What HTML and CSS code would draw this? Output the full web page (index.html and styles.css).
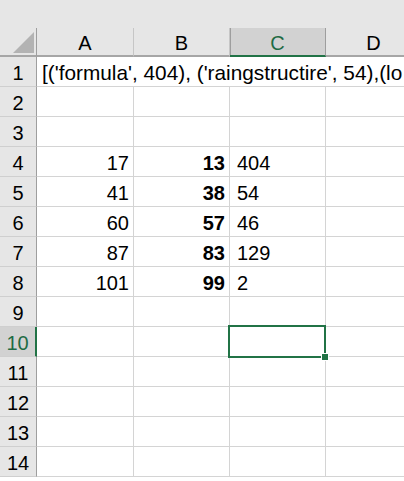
FILE: index.html
```html
<!DOCTYPE html>
<html>
<head>
<meta charset="utf-8">
<link rel="stylesheet" href="styles.css">
</head>
<body>
<div class="sheet">
  <div class="strip"></div>

  <div class="corner"><svg class="tri" width="36" height="27" viewBox="0 0 36 27"><polygon points="13,25 34,4 34,25" fill="#b3b3b3"/></svg></div>
  <div class="colh">A</div>
  <div class="colh">B</div>
  <div class="colh sel">C</div>
  <div class="colh">D</div>

  <div class="rowh">1</div>
  <div class="cell nob"><span class="over">[('formula', 404), ('raingstructire', 54),(lo</span></div>
  <div class="cell nob"></div>
  <div class="cell nob"></div>
  <div class="cell nob"></div>

  <div class="rowh">2</div><div class="cell"></div><div class="cell"></div><div class="cell"></div><div class="cell"></div>
  <div class="rowh">3</div><div class="cell"></div><div class="cell"></div><div class="cell"></div><div class="cell"></div>

  <div class="rowh">4</div><div class="cell num">17</div><div class="cell num b">13</div><div class="cell txt">404</div><div class="cell"></div>
  <div class="rowh">5</div><div class="cell num">41</div><div class="cell num b">38</div><div class="cell txt">54</div><div class="cell"></div>
  <div class="rowh">6</div><div class="cell num">60</div><div class="cell num b">57</div><div class="cell txt">46</div><div class="cell"></div>
  <div class="rowh">7</div><div class="cell num">87</div><div class="cell num b">83</div><div class="cell txt">129</div><div class="cell"></div>
  <div class="rowh">8</div><div class="cell num">101</div><div class="cell num b">99</div><div class="cell txt">2</div><div class="cell"></div>

  <div class="rowh">9</div><div class="cell"></div><div class="cell"></div><div class="cell"></div><div class="cell"></div>
  <div class="rowh sel">10</div><div class="cell"></div><div class="cell"></div><div class="cell"></div><div class="cell"></div>
  <div class="rowh">11</div><div class="cell"></div><div class="cell"></div><div class="cell"></div><div class="cell"></div>
  <div class="rowh">12</div><div class="cell"></div><div class="cell"></div><div class="cell"></div><div class="cell"></div>
  <div class="rowh">13</div><div class="cell"></div><div class="cell"></div><div class="cell"></div><div class="cell"></div>
  <div class="rowh">14</div><div class="cell"></div><div class="cell"></div><div class="cell"></div><div class="cell"></div>

  <div class="cursor"><span class="handle"></span></div>
</div>
</body>
</html>
```

FILE: styles.css
```css
html, body {
  margin: 0;
  padding: 0;
  background: #ffffff;
  overflow: hidden;
}

.sheet {
  position: relative;
  display: grid;
  grid-template-columns: 37px 97px 96px 96px 96px;
  grid-template-rows: 28px 29px repeat(14, 30px);
  width: 404px;
  height: 481px;
  overflow: hidden;
  font-family: "Liberation Sans", Arial, sans-serif;
  font-size: 20px;
  color: #000;
}

.strip {
  grid-column: 1 / -1;
  background: #e6e6e6;
}

.corner {
  background: #e6e6e6;
  border-right: 1px solid #9e9e9e;
  border-bottom: 2px solid #a6a6a6;
  box-sizing: border-box;
}

.tri {
  display: block;
}

.colh {
  background: #e6e6e6;
  border-right: 1px solid #c6c6c6;
  border-bottom: 2px solid #a6a6a6;
  box-sizing: border-box;
  text-align: center;
  line-height: 28px;
  padding-top: 1px;
}

.colh.sel {
  background: #d2d2d2;
  color: #1e6b44;
  border-bottom-color: #217346;
  border-right-color: #9e9e9e;
  box-shadow: inset 1px 0 0 #9e9e9e;
}

.rowh {
  background: #e6e6e6;
  border-right: 1px solid #9e9e9e;
  border-bottom: 1px solid #cfcfcf;
  box-sizing: border-box;
  text-align: center;
  line-height: 30px;
  padding-top: 1px;
}

.rowh.sel {
  background: #d2d2d2;
  color: #1e6b44;
  border-right: 2px solid #217346;
}

.cell {
  border-right: 1px solid #d4d4d4;
  border-bottom: 1px solid #d4d4d4;
  box-sizing: border-box;
  line-height: 30px;
  padding-top: 1px;
  white-space: nowrap;
}

.cell.nob {
  border-right: none;
}

.over {
  display: block;
  padding-left: 5px;
  width: max-content;
  font-size: 20.8px;
}

.num {
  text-align: right;
  padding-right: 4px;
}

.b {
  font-weight: bold;
}

.txt {
  padding-left: 7px;
}

.cursor {
  position: absolute;
  left: 228px;
  top: 325px;
  width: 98px;
  height: 33px;
  border: 2px solid #217346;
  box-sizing: border-box;
  pointer-events: none;
}

.handle {
  position: absolute;
  right: -5px;
  bottom: -5px;
  width: 6px;
  height: 6px;
  background: #217346;
  border: 1px solid #ffffff;
}
```
